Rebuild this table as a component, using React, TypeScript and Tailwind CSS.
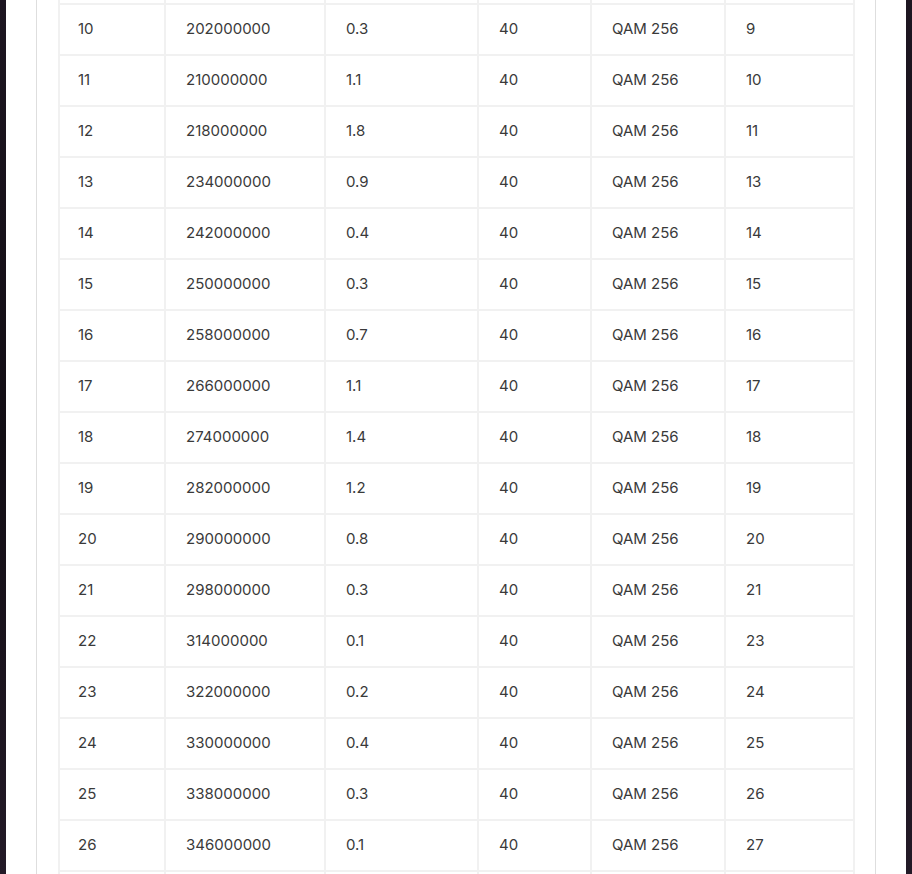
import React from 'react';

// first and last rows are only partly in view; their text lies outside the window
const rows: [string, string, string, string, string, string][] = [
  ['', '', '', '', '', ''],
  ['10', '202000000', '0.3', '40', 'QAM 256', '9'],
  ['11', '210000000', '1.1', '40', 'QAM 256', '10'],
  ['12', '218000000', '1.8', '40', 'QAM 256', '11'],
  ['13', '234000000', '0.9', '40', 'QAM 256', '13'],
  ['14', '242000000', '0.4', '40', 'QAM 256', '14'],
  ['15', '250000000', '0.3', '40', 'QAM 256', '15'],
  ['16', '258000000', '0.7', '40', 'QAM 256', '16'],
  ['17', '266000000', '1.1', '40', 'QAM 256', '17'],
  ['18', '274000000', '1.4', '40', 'QAM 256', '18'],
  ['19', '282000000', '1.2', '40', 'QAM 256', '19'],
  ['20', '290000000', '0.8', '40', 'QAM 256', '20'],
  ['21', '298000000', '0.3', '40', 'QAM 256', '21'],
  ['22', '314000000', '0.1', '40', 'QAM 256', '23'],
  ['23', '322000000', '0.2', '40', 'QAM 256', '24'],
  ['24', '330000000', '0.4', '40', 'QAM 256', '25'],
  ['25', '338000000', '0.3', '40', 'QAM 256', '26'],
  ['26', '346000000', '0.1', '40', 'QAM 256', '27'],
  ['', '', '', '', '', ''],
];

const App: React.FC = () => {
  return (
    <div className="h-[874px] overflow-hidden bg-gradient-to-b from-[#1d1621] via-[#120d14] to-[#231a27] font-['Inter',sans-serif]">
      <div className="ml-[6px] w-[900px] h-full bg-white overflow-hidden">
        <div className="ml-[30px] w-[840px] h-full border-x border-[#dedede] pl-[21px] pr-[20px] overflow-hidden">
          <table className="mt-[-48px] w-[797px] table-fixed border-separate border-spacing-[2px] bg-[#f1f1f1] text-[15px] text-[#3a3a3a]">
            <colgroup>
              <col className="w-[104px]" />
              <col className="w-[158px]" />
              <col className="w-[151px]" />
              <col className="w-[111px]" />
              <col className="w-[132px]" />
              <col className="w-[127px]" />
            </colgroup>
            <tbody>
              {rows.map((r, ri) => (
                <tr key={ri}>
                  {r.map((c, i) => (
                    <td key={i} className={`h-[49px] bg-white p-0 align-middle ${i === 0 ? 'pl-[18px]' : 'pl-[20px]'}`}>
                      {c}
                    </td>
                  ))}
                </tr>
              ))}
            </tbody>
          </table>
        </div>
      </div>
    </div>
  );
};

export default App;
